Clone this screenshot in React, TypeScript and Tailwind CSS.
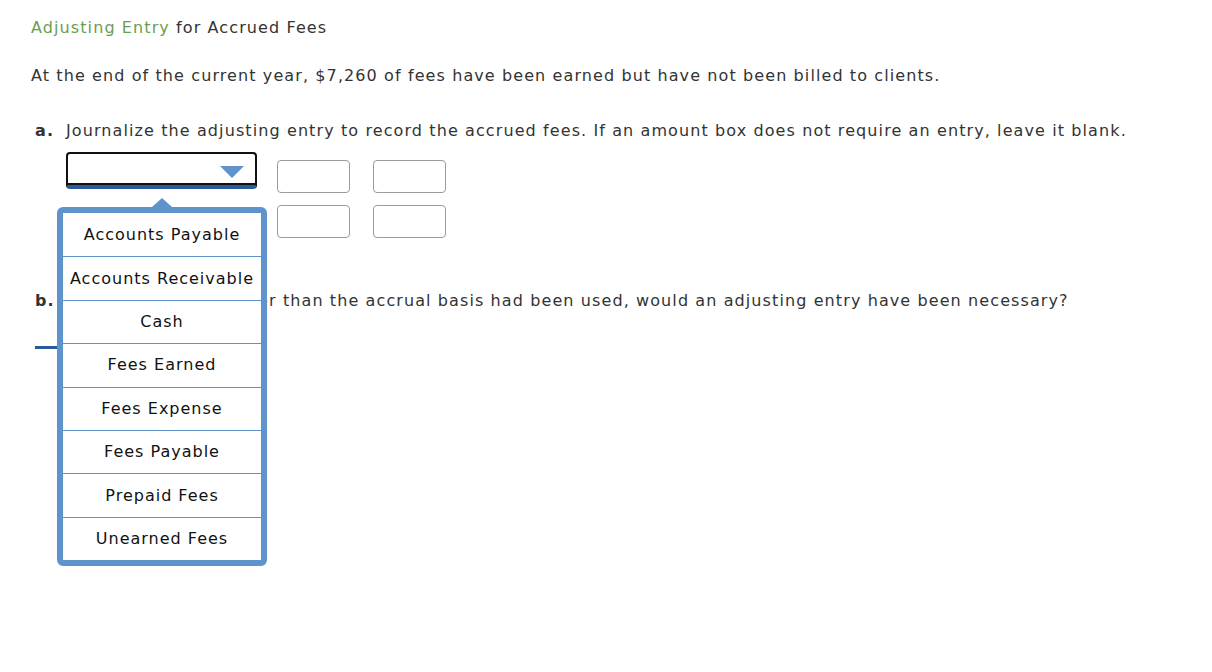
import React from "react";

const accounts = [
  "Accounts Payable",
  "Accounts Receivable",
  "Cash",
  "Fees Earned",
  "Fees Expense",
  "Fees Payable",
  "Prepaid Fees",
  "Unearned Fees",
];

const AmountBox = () => (
  <div className="w-[73px] h-[33px] rounded-[4px] border border-[#9a9a9a] bg-white" />
);

export default function App() {
  return (
    <div
      className="relative min-h-screen bg-white text-[#333] text-[16px] tracking-[1.1px]"
      style={{ fontFamily: '"DejaVu Sans", Verdana, sans-serif' }}
    >
      <div className="pl-[31px] pt-[17px]">
        <h2 className="leading-[22px]">
          <span className="text-[#6a9e50]">Adjusting Entry</span> for Accrued Fees
        </h2>
        <p className="mt-[26px] leading-[22px]">
          At the end of the current year, $7,260 of fees have been earned but have not been billed to clients.
        </p>
      </div>

      <div className="pl-[35px] mt-[33px]">
        <div className="flex leading-[22px]">
          <span className="w-[31px] font-bold">a.</span>
          <span>
            Journalize the adjusting entry to record the accrued fees. If an amount box does not require an entry,
            leave it blank.
          </span>
        </div>

        {/* journal entry rows */}
        <div className="ml-[31px] mt-[10px] flex gap-[20px]">
          <div className="relative w-[191px] h-[37px] rounded-[4px] border-2 border-[#111] border-b-[4px] border-b-[#2a5a9a] shadow-[inset_0_-2px_0_#111]">
            <svg className="absolute right-[11px] top-[12px]" width="24" height="12" viewBox="0 0 24 12">
              <polygon points="0,0 24,0 12,12" fill="#5f93cc" />
            </svg>
          </div>
          <div className="flex flex-col gap-[12px] pt-[8px]">
            <div className="flex gap-[23px]">
              <AmountBox />
              <AmountBox />
            </div>
            <div className="flex gap-[23px]">
              <AmountBox />
              <AmountBox />
            </div>
          </div>
        </div>

        <div className="flex leading-[22px] mt-[52px]">
          <span className="w-[31px] font-bold">b.</span>
          <span>
            If the cash basis rather than the accrual basis had been used, would an adjusting entry have been
            necessary?
          </span>
        </div>
        <div className="mt-[34px] w-[190px] h-[3px] bg-[#2a5a9a]" />
      </div>

      {/* open account list */}
      <div className="absolute left-[57px] top-[207px] w-[210px] tracking-[1px]">
        <div className="absolute left-1/2 -translate-x-1/2 -top-[9px] w-0 h-0 border-x-[10px] border-x-transparent border-b-[9px] border-b-[#5f93cc]" />
        <ul className="rounded-[6px] border-[6px] border-[#5f93cc] bg-white">
          {accounts.map((name, i) => (
            <li
              key={name}
              className={`h-[43.4px] flex items-center justify-center text-[#111] ${
                i > 0 ? "border-t border-[#5f93cc]" : ""
              }`}
            >
              {name}
            </li>
          ))}
        </ul>
      </div>
    </div>
  );
}
